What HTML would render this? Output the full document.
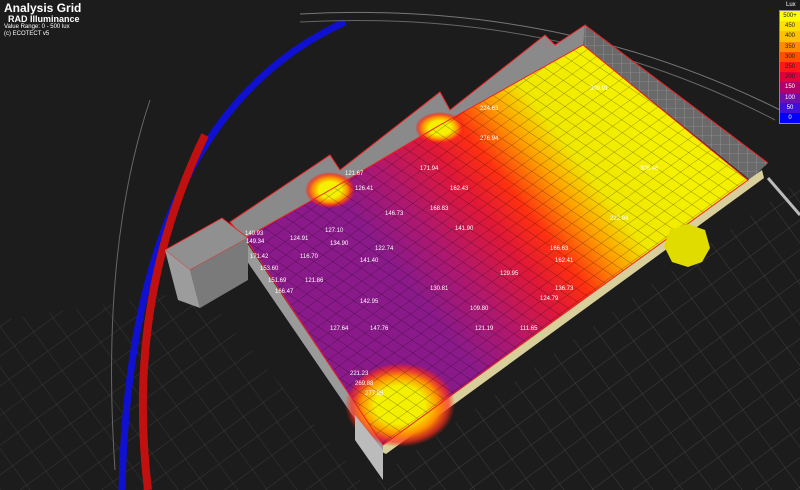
<!DOCTYPE html>
<html><head><style>
html,body{margin:0;padding:0;background:#1c1c1c;width:800px;height:490px;overflow:hidden;font-family:"Liberation Sans",sans-serif}
.t{position:absolute;color:#fff;left:4px}
</style></head><body>
<svg width="800" height="490" style="position:absolute;left:0;top:0">
<defs>
<pattern id="g" width="11" height="11" patternUnits="userSpaceOnUse" patternTransform="rotate(-36) skewX(20)">
<path d="M0 0H11M0 0V11" stroke="#000" stroke-opacity=".5" stroke-width=".8" fill="none"/></pattern>
<pattern id="gg" width="24" height="24" patternUnits="userSpaceOnUse" patternTransform="rotate(-36)">
<path d="M0 0H24M0 0V24" stroke="#4a4a4a" stroke-width=".7" fill="none"/></pattern>
<pattern id="wg" width="9" height="9" patternUnits="userSpaceOnUse">
<path d="M0 0H9M0 0V9" stroke="#ccc" stroke-width=".6" fill="none"/></pattern>
<linearGradient id="f" x1="640" y1="130" x2="420" y2="300" gradientUnits="userSpaceOnUse">
<stop offset="0" stop-color="#f4f000"/><stop offset=".24" stop-color="#f0e800"/><stop offset=".36" stop-color="#ffa000"/><stop offset=".5" stop-color="#ff3010"/><stop offset=".63" stop-color="#e01838"/><stop offset=".82" stop-color="#b0186e"/><stop offset="1" stop-color="#8a1a8a"/></linearGradient>
<radialGradient id="y"><stop offset=".45" stop-color="#f4f000"/><stop offset=".7" stop-color="#ff9000"/><stop offset=".88" stop-color="#ff3020" stop-opacity=".7"/><stop offset="1" stop-color="#ff2000" stop-opacity="0"/></radialGradient>
</defs>
<polygon points="360,490 800,180 800,490" fill="url(#gg)"/>
<polygon points="0,490 370,490 200,290 0,320" fill="url(#gg)" opacity=".8"/>
<path d="M345,22 Q130,120 122,490" stroke="#1010d0" stroke-width="7" fill="none"/>
<path d="M205,135 Q125,300 148,490" stroke="#c01010" stroke-width="8" fill="none"/>
<path d="M300,14 Q560,0 780,110" stroke="#777" stroke-width="1" fill="none"/>
<path d="M300,22 Q560,8 775,120" stroke="#666" stroke-width="1" fill="none"/>
<path d="M150,100 Q100,250 115,470" stroke="#666" stroke-width="1" fill="none"/>
<polygon points="230,222 330,155 340,170 440,92 450,110 545,35 555,45 585,25 585,45 440,125 330,190 245,240" fill="#8a8a8a" stroke="#f02020" stroke-width="1"/>
<polygon points="585,25 768,163 750,180 583,45" fill="#6a6a6a"/>
<polygon points="585,25 768,163 750,180 583,45" fill="url(#wg)" opacity=".6"/>
<line x1="585" y1="25" x2="768" y2="163" stroke="#f02020"/>
<polygon points="383,445 748,180 762,170 764,178 386,454 378,450" fill="#d8cf9a"/>
<polygon points="245,240 383,445 383,460 238,248" fill="#9a9a9a"/>
<polygon points="245,238 330,190 440,125 583,45 748,180 383,445" fill="url(#f)"/>
<ellipse cx="400" cy="405" rx="55" ry="42" fill="url(#y)"/>
<ellipse cx="330" cy="190" rx="25" ry="18" fill="url(#y)"/>
<ellipse cx="440" cy="128" rx="25" ry="16" fill="url(#y)"/>
<polygon points="245,238 330,190 440,125 583,45 748,180 383,445" fill="url(#g)"/>
<polygon points="245,238 330,190 440,125 583,45 748,180 383,445" fill="none" stroke="#f02020" stroke-width="1"/>
<polygon points="165,250 222,218 248,238 190,270" fill="#909090" stroke="#f02020" stroke-width=".8"/>
<polygon points="190,270 248,238 248,280 200,308" fill="#7a7a7a"/>
<polygon points="165,250 190,270 200,308 178,300" fill="#9c9c9c"/>
<polygon points="355,415 383,450 383,480 355,440" fill="#bbb"/>
<polygon points="688,224 705,230 710,248 702,262 688,267 672,262 664,246 670,230" fill="#e0dc00"/>
<line x1="768" y1="178" x2="800" y2="215" stroke="#bbb" stroke-width="3"/>
<g fill="#fff" font-size="6">
<text x="245" y="235">140.93</text><text x="246" y="243">149.34</text><text x="250" y="258">171.42</text><text x="260" y="270">153.60</text><text x="268" y="282">151.69</text><text x="275" y="293">166.47</text><text x="290" y="240">124.91</text><text x="300" y="258">116.70</text><text x="305" y="282">121.86</text><text x="325" y="232">127.10</text><text x="330" y="245">134.90</text><text x="360" y="262">141.40</text><text x="360" y="303">142.95</text><text x="375" y="250">122.74</text><text x="370" y="330">147.76</text><text x="330" y="330">127.64</text><text x="345" y="175">121.67</text><text x="355" y="190">126.41</text><text x="385" y="215">146.73</text><text x="420" y="170">171.94</text><text x="430" y="210">168.83</text><text x="450" y="190">162.43</text><text x="455" y="230">141.90</text><text x="430" y="290">130.81</text><text x="470" y="310">109.80</text><text x="475" y="330">121.19</text><text x="500" y="275">129.95</text><text x="550" y="250">166.63</text><text x="555" y="262">162.41</text><text x="555" y="290">136.73</text><text x="540" y="300">124.79</text><text x="520" y="330">111.65</text><text x="480" y="140">276.94</text><text x="480" y="110">224.63</text><text x="610" y="220">222.94</text><text x="590" y="90">309.91</text><text x="640" y="170">308.46</text><text x="350" y="375">221.23</text><text x="355" y="385">269.88</text><text x="365" y="395">277.85</text>
</g>
</svg>
<div class="t" style="top:1px;font-size:12px;font-weight:bold">Analysis Grid</div>
<div class="t" style="top:14px;font-size:9px;font-weight:bold;left:8px">RAD Illuminance</div>
<div class="t" style="top:24px;font-size:6px">Value Range: 0 - 500 lux</div>
<div class="t" style="top:31px;font-size:6px">(c) ECOTECT v5</div>
<div style="position:absolute;left:786px;top:2px;color:#fff;font-size:6px">Lux</div>
<div style="position:absolute;left:779px;top:10px;width:20px;font-size:6px;color:#222;text-align:center;line-height:10.2px;border:1px solid #888">
<div style="background:#ffff00">500+</div><div style="background:#ffe000">450</div><div style="background:#ffc000">400</div><div style="background:#ff8c00">350</div><div style="background:#ff5000">300</div><div style="background:#ff1818">250</div><div style="background:#e0003a">200</div><div style="background:#b00070;color:#fff">150</div><div style="background:#7010a8;color:#fff">100</div><div style="background:#4010d8;color:#fff">50</div><div style="background:#0000ff;color:#fff">0</div>
</div>
</body></html>
